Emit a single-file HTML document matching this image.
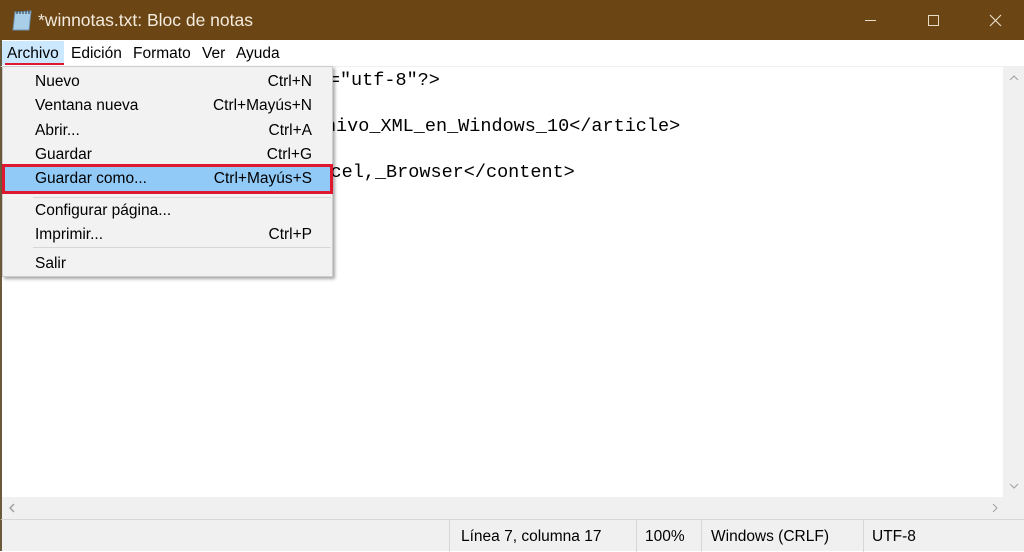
<!DOCTYPE html>
<html><head><meta charset="utf-8"><style>
*{margin:0;padding:0;box-sizing:border-box}
body{width:1024px;height:551px;overflow:hidden;background:#fff;font-family:"Liberation Sans",sans-serif;position:relative}
.abs{position:absolute}
#title{left:0;top:0;width:1024px;height:40px;background:#6b4513;border-left:1px solid #6b4513}
#title .t{left:37px;top:10px;color:#f3ebde;font-size:17.5px;white-space:nowrap}
#menubar{left:0;top:40px;width:1024px;height:26px;background:#fff;border-left:2px solid #6b5a3a}
.mb{top:5px;font-size:15.5px;color:#000;white-space:nowrap}
#editor{left:0;top:66px;width:1003px;height:431px;background:#fff;border-left:2px solid #6b5a3a;border-top:1px solid #f0f0f0}
.code{font-family:"Liberation Mono",monospace;font-size:18.5px;white-space:pre;color:#000;left:4px}
#vs{left:1003px;top:66px;width:21px;height:431px;background:#f0f0f0}
#hs{left:0;top:497px;width:1024px;height:22px;background:#f0f0f0;border-left:2px solid #6b5a3a}
#status{left:0;top:519px;width:1024px;height:32px;background:#f0f0f0;border-top:1px solid #d7d7d7;border-left:2px solid #6b5a3a}
.sd{top:0;width:1px;height:32px;background:#d7d7d7}
.st{top:8px;font-size:15.5px;color:#000;white-space:nowrap}
#menu{left:2px;top:66px;width:331px;height:211px;background:#f2f2f2;border:1px solid #cccccc;box-shadow:2px 2px 3px rgba(0,0,0,.35)}
.mi{left:32px;font-size:15.5px;color:#000;white-space:nowrap}
.sc{right:20px;font-size:15.5px;color:#000;white-space:nowrap}
.sep{left:30px;width:298px;height:1px;background:#d7d7d7}
</style></head><body>
<div id="title" class="abs">
 <svg class="abs" style="left:11px;top:9px" width="21" height="22" viewBox="0 0 21 22">
  <polygon points="3,3 19,2 17,21 1,21" fill="#a9cfe8" stroke="#6f94b4" stroke-width="1"/>
  <path d="M5 2v3M8 2v3M11 2v3M14 2v3M17 2v3" stroke="#3a4a5a" stroke-width="1.2"/>
 </svg>
 <div class="abs t">*winnotas.txt: Bloc de notas</div>
 <div class="abs" style="left:864px;top:20px;width:11px;height:1px;background:#e8dcc8"></div>
 <div class="abs" style="left:927px;top:15px;width:11px;height:11px;border:1px solid #e8dcc8"></div>
 <svg class="abs" style="left:988px;top:14px" width="13" height="13"><path d="M1 1L12 12M12 1L1 12" stroke="#e8dcc8" stroke-width="1.2"/></svg>
</div>
<div id="menubar" class="abs">
 <div class="abs" style="left:0;top:1px;width:62px;height:24px;background:#cce8ff"></div>
 <div class="abs" style="left:3px;top:23px;width:59px;height:2px;background:#e0182f"></div>
 <div class="abs mb" style="left:5px">Archivo</div>
 <div class="abs mb" style="left:69px">Edición</div>
 <div class="abs mb" style="left:131px">Formato</div>
 <div class="abs mb" style="left:200px">Ver</div>
 <div class="abs mb" style="left:234px">Ayuda</div>
</div>
<div id="editor" class="abs">
 <div class="abs code" style="left:16px;top:3px">&lt;?xml version="1.0" encoding="utf-8"?&gt;</div>
 <div class="abs code" style="left:1px;top:49px">        &lt;article&gt;Crear_un_archivo_XML_en_Windows_10&lt;/article&gt;</div>
 <div class="abs code" style="left:51px;top:95px">        &lt;content&gt;Word,_Excel,_Browser&lt;/content&gt;</div>
</div>
<div id="vs" class="abs">
 <svg class="abs" style="left:6px;top:9px" width="10" height="6"><path d="M1 5L5 1L9 5" stroke="#a0a0a0" fill="none"/></svg>
 <svg class="abs" style="left:6px;top:417px" width="10" height="6"><path d="M1 1L5 5L9 1" stroke="#a0a0a0" fill="none"/></svg>
</div>
<div id="hs" class="abs">
 <svg class="abs" style="left:7px;top:6px" width="6" height="10"><path d="M5 1L1 5L5 9" stroke="#a0a0a0" stroke-width="1.5" fill="none"/></svg>
 <svg class="abs" style="left:990px;top:6px" width="6" height="10"><path d="M1 1L5 5L1 9" stroke="#a0a0a0" fill="none"/></svg>
</div>
<div id="status" class="abs">
 <div class="abs sd" style="left:447px"></div>
 <div class="abs sd" style="left:634px"></div>
 <div class="abs sd" style="left:699px"></div>
 <div class="abs sd" style="left:861px"></div>
 <div class="abs st" style="left:459px">Línea 7, columna 17</div>
 <div class="abs st" style="left:643px">100%</div>
 <div class="abs st" style="left:709px">Windows (CRLF)</div>
 <div class="abs st" style="left:870px">UTF-8</div>
</div>
<div id="menu" class="abs">
 <div class="abs mi" style="top:6px">Nuevo</div><div class="abs sc" style="top:6px">Ctrl+N</div>
 <div class="abs mi" style="top:30px">Ventana nueva</div><div class="abs sc" style="top:30px">Ctrl+Mayús+N</div>
 <div class="abs mi" style="top:55px">Abrir...</div><div class="abs sc" style="top:55px">Ctrl+A</div>
 <div class="abs mi" style="top:79px">Guardar</div><div class="abs sc" style="top:79px">Ctrl+G</div>
 <div class="abs" style="left:-1px;top:97px;width:331px;height:30px;background:#91c9f7;border:3px solid #e0182f"></div>
 <div class="abs mi" style="top:103px">Guardar como...</div><div class="abs sc" style="top:103px">Ctrl+Mayús+S</div>
 <div class="abs sep" style="top:130px"></div>
 <div class="abs mi" style="top:135px">Configurar página...</div>
 <div class="abs mi" style="top:159px">Imprimir...</div><div class="abs sc" style="top:159px">Ctrl+P</div>
 <div class="abs sep" style="top:180px"></div>
 <div class="abs mi" style="top:188px">Salir</div>
</div>
</body></html>
